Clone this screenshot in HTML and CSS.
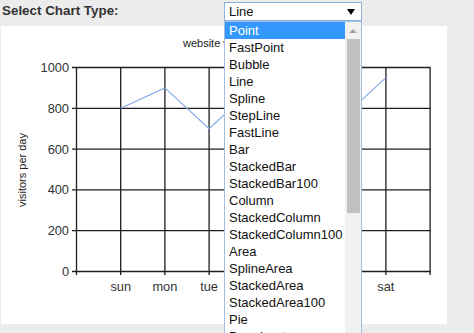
FILE: index.html
```html
<!DOCTYPE html>
<html>
<head>
<meta charset="utf-8">
<link rel="stylesheet" href="styles.css">
</head>
<body>
<div class="page">
  <div class="toolbar"><span class="label">Select Chart Type:</span></div>
  <div class="panel">
    <svg class="chart" width="446" height="298" viewBox="0 0 446 298">
      <g transform="translate(-1,-26)">
        <text class="title" x="183" y="47">website visitors</text>
        <g class="grid">
          <line x1="72" y1="67.5" x2="430.5" y2="67.5"/>
          <line x1="72" y1="108.3" x2="430.5" y2="108.3"/>
          <line x1="72" y1="149.1" x2="430.5" y2="149.1"/>
          <line x1="72" y1="189.9" x2="430.5" y2="189.9"/>
          <line x1="72" y1="230.7" x2="430.5" y2="230.7"/>
          <line x1="72" y1="271.5" x2="430.5" y2="271.5"/>
          <line x1="76.5" y1="67.5" x2="76.5" y2="275"/>
          <line x1="120.7" y1="67.5" x2="120.7" y2="275"/>
          <line x1="164.9" y1="67.5" x2="164.9" y2="275"/>
          <line x1="209.1" y1="67.5" x2="209.1" y2="275"/>
          <line x1="253.3" y1="67.5" x2="253.3" y2="275"/>
          <line x1="297.5" y1="67.5" x2="297.5" y2="275"/>
          <line x1="341.7" y1="67.5" x2="341.7" y2="275"/>
          <line x1="385.9" y1="67.5" x2="385.9" y2="275"/>
          <line x1="430.1" y1="67.5" x2="430.1" y2="275"/>
        </g>
        <polyline class="series" points="120.7,108.3 164.9,87.9 209.1,128.7 253.3,87.9 297.5,98.1 341.7,118.5 385.9,77.7"/>
        <g class="ylabels">
          <text x="69" y="72">1000</text>
          <text x="69" y="112.8">800</text>
          <text x="69" y="153.6">600</text>
          <text x="69" y="194.4">400</text>
          <text x="69" y="235.2">200</text>
          <text x="69" y="276">0</text>
        </g>
        <g class="xlabels">
          <text x="120.7" y="291">sun</text>
          <text x="164.9" y="291">mon</text>
          <text x="209.1" y="291">tue</text>
          <text x="253.3" y="291">wed</text>
          <text x="297.5" y="291">thu</text>
          <text x="341.7" y="291">fri</text>
          <text x="385.9" y="291">sat</text>
        </g>
        <text class="ytitle" x="26" y="170" transform="rotate(-90 26 170)">visitors per day</text>
      </g>
    </svg>
  </div>
  <div class="picker">
    <div class="select">
      <span class="select-value">Line</span>
      <span class="select-arrow"></span>
    </div>
    <div class="list">
      <ul class="options">
        <li class="option selected">Point</li>
        <li class="option">FastPoint</li>
        <li class="option">Bubble</li>
        <li class="option">Line</li>
        <li class="option">Spline</li>
        <li class="option">StepLine</li>
        <li class="option">FastLine</li>
        <li class="option">Bar</li>
        <li class="option">StackedBar</li>
        <li class="option">StackedBar100</li>
        <li class="option">Column</li>
        <li class="option">StackedColumn</li>
        <li class="option">StackedColumn100</li>
        <li class="option">Area</li>
        <li class="option">SplineArea</li>
        <li class="option">StackedArea</li>
        <li class="option">StackedArea100</li>
        <li class="option">Pie</li>
        <li class="option">Doughnut</li>
        <li class="option">Funnel</li>
      </ul>
      <div class="scrollbar">
        <div class="scroll-up"><span class="up-arrow"></span></div>
        <div class="scroll-thumb"></div>
      </div>
    </div>
  </div>
</div>
</body>
</html>
```

FILE: styles.css
```css
html, body {
  margin: 0;
  padding: 0;
  overflow: hidden;
  background: #ececec;
  font-family: "Liberation Sans", Arial, sans-serif;
}

.page {
  position: relative;
  width: 474px;
  height: 333px;
  overflow: hidden;
}

.toolbar {
  height: 26px;
  display: flex;
  align-items: flex-start;
}

.label {
  font-weight: bold;
  font-size: 13.4px;
  color: #333;
  margin: 3px 0 0 2px;
  line-height: 15px;
}

.panel {
  margin-left: 1px;
  width: 446px;
  height: 298px;
  background: #fff;
}

.chart {
  display: block;
}

.grid line {
  stroke: #1e1e1e;
  stroke-width: 1.3;
}

.series {
  fill: none;
  stroke: #82a8e8;
  stroke-width: 1.1;
}

.title {
  font-size: 11px;
  fill: #222;
}

.ylabels text {
  font-size: 12.8px;
  fill: #333;
  text-anchor: end;
}

.xlabels text {
  font-size: 12.8px;
  fill: #333;
  text-anchor: middle;
}

.ytitle {
  font-size: 11px;
  fill: #222;
  text-anchor: middle;
}

.picker {
  position: absolute;
  left: 224px;
  top: 2px;
  width: 138px;
}

.select {
  box-sizing: border-box;
  height: 19px;
  border: 1px solid #8eb2e2;
  background: #fff;
  display: flex;
  align-items: center;
  justify-content: space-between;
  padding: 0 6px 0 4px;
}

.select-value {
  font-size: 13px;
  color: #111;
  line-height: 17px;
}

.select-arrow {
  width: 0;
  height: 0;
  border-left: 4px solid transparent;
  border-right: 4px solid transparent;
  border-top: 6px solid #000;
}

.list {
  box-sizing: border-box;
  border: 1px solid #a3bddf;
  border-bottom: none;
  background: #fff;
  display: flex;
  height: 340px;
}

.options {
  list-style: none;
  margin: 0;
  padding: 0;
  flex: 1;
}

.option {
  height: 17px;
  line-height: 17px;
  font-size: 13px;
  color: #111;
  padding-left: 4px;
  white-space: nowrap;
}

.option.selected {
  background: #3399ff;
  color: #fff;
}

.scrollbar {
  width: 16px;
  background: #f1f1f1;
  display: flex;
  flex-direction: column;
  align-items: center;
}

.scroll-up {
  height: 17px;
  width: 16px;
  display: flex;
  align-items: center;
  justify-content: center;
}

.up-arrow {
  width: 0;
  height: 0;
  border-left: 4px solid transparent;
  border-right: 4px solid transparent;
  border-bottom: 4px solid #a3a3a3;
}

.scroll-thumb {
  width: 13px;
  height: 174px;
  background: #c1c1c1;
}
```
